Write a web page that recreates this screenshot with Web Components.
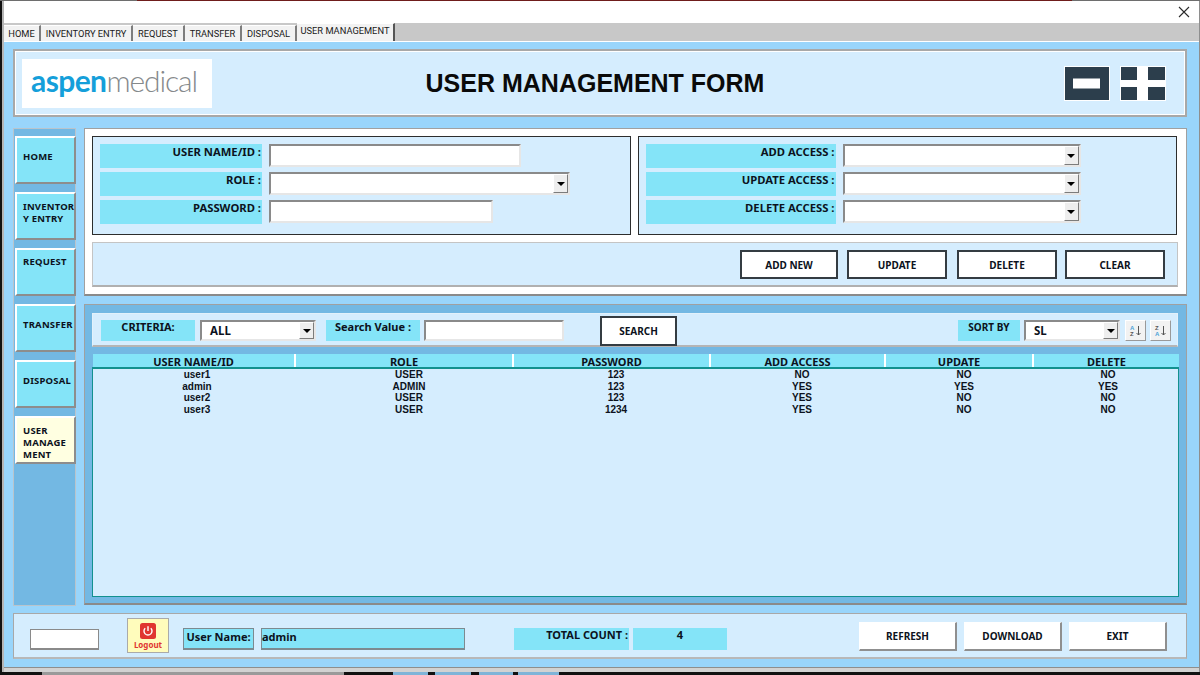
<!DOCTYPE html>
<html>
<head>
<meta charset="utf-8">
<title>User Management Form</title>
<style>
  html, body { margin: 0; height: 100%; background: #111; overflow: hidden; }
  body { font: bold 11px "Noto Sans", Tahoma, sans-serif; color: #0c1220; }
</style>
</head>
<body>
<app-window>
  <tab-strip></tab-strip>
  <form-header></form-header>
  <div id="middle" style="display:flex;gap:8px;height:478px;margin-top:11px">
    <side-menu></side-menu>
    <div style="display:flex;flex-direction:column;gap:8px;width:1103px">
      <entry-panel></entry-panel>
      <grid-panel></grid-panel>
    </div>
  </div>
  <status-bar></status-bar>
</app-window>

<script>
const sunken = 'border:2px solid; border-color:#8a8a8a #e6e6e6 #e6e6e6 #8a8a8a;';

class AppWindow extends HTMLElement {
  constructor() {
    super();
    this.attachShadow({ mode: 'open' }).innerHTML = `
      <style>
        :host { display: block; height: 675px; box-sizing: border-box; }
        .edge { height: 1px; display: flex; }
        .edge i { display: block; height: 1px; }
        .frame { margin-left: 2px; width: 1195px; border-left: 2px solid #b5b5b5; border-right: 2px solid #8e8e8e; background: #fff; }
        .title { height: 22px; display: flex; justify-content: flex-end; align-items: center; padding-right: 9px; }
        .page { height: 626px; background: #99d5fb; padding: 7px 4px 0 9px; box-sizing: border-box; border-top: 1px solid #fff; }
        .foot { height: 4px; background: #d2d2d2; border-top: 1px solid #8e8e8e; }
        .taskbar { display: flex; height: 3px; background: #111; }
        .taskbar i { display: block; height: 3px; }
      </style>
      <div class="edge"><i style="width:137px;background:#6e6e6e"></i><i style="width:935px;background:#6f1d1b"></i><i style="width:128px;background:#6e6e6e"></i></div>
      <div class="frame">
        <div class="title">
          <svg width="12" height="12" viewBox="0 0 12 12"><path d="M1 1L11 11M11 1L1 11" stroke="#2a2a2a" stroke-width="1.1" fill="none"/></svg>
        </div>
        <slot name="tabs"></slot>
        <div class="page"><slot></slot></div>
        <div class="foot"></div>
      </div>
      <div class="taskbar">
        <i style="width:302px;margin-left:42px;background:#9a9a9a"></i>
        <i style="width:35px;margin-left:49px;background:#7fb4d8"></i>
        <i style="width:36px;margin-left:7px;background:#7fb4d8"></i>
        <i style="width:34px;margin-left:8px;background:#7fb4d8"></i>
        <i style="width:41px;margin-left:5px;background:#7fb4d8"></i>
      </div>`;
    const tabs = this.querySelector('tab-strip');
    if (tabs) tabs.slot = 'tabs';
  }
}

class TabStrip extends HTMLElement {
  constructor() {
    super();
    const names = ['HOME', 'INVENTORY ENTRY', 'REQUEST', 'TRANSFER', 'DISPOSAL', 'USER MANAGEMENT'];
    const widths = [37, 92, 52, 57, 55, 98];
    const html = names.map((n, i) =>
      `<span class="tab ${i === 5 ? 'on' : ''}" style="width:${widths[i]}px">${n}</span>`).join('');
    this.attachShadow({ mode: 'open' }).innerHTML = `
      <style>
        :host { display: flex; height: 18px; background: #c8c8c8; align-items: flex-end; overflow: hidden; }
        .tab { display: block; box-sizing: border-box; height: 16px; background: #f2f2f2; border-right: 2px solid #7d7d7d; border-top: 1px solid #fff;
          font: 400 9.300px Roboto, Arial, sans-serif; color: #1a1a1a; line-height: 15px; text-align: center; white-space: nowrap; }
        .tab.on { height: 18px; line-height: 13px; border-right: 2px solid #555; }
      </style>${html}`;
  }
}

class FormHeader extends HTMLElement {
  constructor() {
    super();
    this.attachShadow({ mode: 'open' }).innerHTML = `
      <style>
        :host { display: flex; box-sizing: border-box; width: 1174px; height: 68px; background: #d5edfe; border: 2px solid #a8a8a8; outline: 1px solid #fff; outline-offset: -3px; align-items: center; padding: 0 19px 0 7px; }
        .logo { width: 190px; height: 49px; background: #fff; font: 300 30px Lato, "Open Sans", sans-serif; letter-spacing: -1.1px; line-height: 43px; padding-left: 9px; box-sizing: border-box; color: #85898b; white-space: nowrap; }
        .logo b { color: #159fda; font-weight: 700; letter-spacing: -.6px; }
        h1 { flex: 1; margin: 0; text-align: center; font: 700 25px "Liberation Sans", Arial, sans-serif; color: #0a0a0a; padding-right: 86px; }
        .tools { display: flex; gap: 10px; }
        svg { display: block; }
      </style>
      <div class="logo"><b>aspen</b>medical</div>
      <h1>USER MANAGEMENT FORM</h1>
      <div class="tools">
        <svg width="46" height="35" viewBox="0 0 46 35"><rect width="46" height="35" fill="#fff"/><rect x="1" y="1" width="44" height="33" fill="#2c3e4c"/><rect x="9" y="12.500" width="27" height="10" fill="#fff"/></svg>
        <svg width="46" height="35" viewBox="0 0 46 35"><rect width="46" height="35" fill="#fff"/><rect x="1" y="1" width="44" height="33" fill="#2c3e4c"/><rect x="17" y="0" width="11" height="35" fill="#fff"/><rect x="0" y="14" width="46" height="7" fill="#fff"/></svg>
      </div>`;
  }
}

class SideMenu extends HTMLElement {
  constructor() {
    super();
    const items = [['HOME', ''], ['INVENTOR<br>Y ENTRY', ''], ['REQUEST', 'tr'], ['TRANSFER', 'tt'], ['DISPOSAL', ''], ['USER<br>MANAGE<br>MENT', 'on']];
    this.attachShadow({ mode: 'open' }).innerHTML = `
      <style>
        :host { display: flex; flex-direction: column; gap: 8px; box-sizing: border-box; width: 63px; height: 478px; background: #73b8e3; border: 1px solid #b9c4cc; padding: 7px 0 0 1px; }
        .b { box-sizing: border-box; width: 61px; height: 48px; background: #84e4f8; border: 2px solid; border-color: #fff #8d8d8d #8d8d8d #fff; padding: 0 0 6px 6px; display: flex; align-items: center; font-size: 9.500px; letter-spacing: .2px; line-height: 12px; white-space: nowrap; }
        .tr { align-items: flex-start; padding: 6px 0 0 6px; }
        .tt { align-items: flex-start; padding: 13px 0 0 6px; }
        .on { background: #ffffe1; padding: 6px 0 0 6px; }
      </style>
      ${items.map(([t, c]) => `<div class="b ${c}"><span>${t}</span></div>`).join('')}`;
  }
}

class FieldLabel extends HTMLElement {
  constructor() {
    super();
    this.attachShadow({ mode: 'open' }).innerHTML = `
      <style>
        :host { display: block; box-sizing: border-box; height: 24px; background: #84e4f8; font-size: 11.250px; line-height: 15px; padding: 0 1px; white-space: nowrap; text-align: right; }
      </style><slot></slot>`;
  }
}

class TextField extends HTMLElement {
  constructor() {
    super();
    this.attachShadow({ mode: 'open' }).innerHTML = `
      <style>
        :host { display: block; box-sizing: border-box; height: 23px; background: #fff; ${sunken} font-size: 11.500px; line-height: 19px; padding-left: 7px; }
      </style><slot></slot>`;
  }
}

class ComboField extends HTMLElement {
  constructor() {
    super();
    this.attachShadow({ mode: 'open' }).innerHTML = `
      <style>
        :host { display: flex; box-sizing: border-box; height: 23px; background: #fff; ${sunken} font-size: 11.500px; line-height: 17px; }
        .v { flex: 1; padding-left: 8px; }
        .arrow { box-sizing: border-box; width: 15px; background: #eee; border: 1px solid; border-color: #fff #7c7c7c #7c7c7c #fff; display: flex; align-items: center; justify-content: center; }
        .arrow i { display: block; border: 4px solid transparent; border-top: 4px solid #000; border-bottom: 0; }
      </style>
      <div class="v"><slot></slot></div>
      <div class="arrow"><i></i></div>`;
  }
}

class CmdButton extends HTMLElement {
  constructor() {
    super();
    this.attachShadow({ mode: 'open' }).innerHTML = `
      <style>
        :host { display: flex; align-items: center; justify-content: center; box-sizing: border-box; height: 29px; background: #fff; border: 2px solid #343c42; font-size: 10px; color: #0c1220; }
        :host([flat]) { border: 1px solid #fff; border-right: 2px solid #8f8f8f; border-bottom: 2px solid #8f8f8f; }
      </style><slot></slot>`;
  }
}

class EntryPanel extends HTMLElement {
  constructor() {
    super();
    this.attachShadow({ mode: 'open' }).innerHTML = `
      <style>
        :host { display: block; box-sizing: border-box; height: 168px; background: #fff; border: 1px solid #a0a0a0; border-bottom: 2px solid #8a8a8a; padding: 7px 9px 0 7px; }
        .row { display: flex; gap: 7px; }
        .box { box-sizing: border-box; width: 539px; height: 99px; background: #d5edfe; border: 1px solid #2d2d2d; padding: 7px; display: grid; row-gap: 4px; align-content: start; }
        .box.r { width: 540px; }
        .box > div { display: grid; column-gap: 7px; align-items: start; }
        .acts { box-sizing: border-box; margin-top: 7px; height: 45px; width: 1086px; background: #d5edfe; border: 1px solid #c4c4c4; border-bottom: 2px solid #b0b0b0; display: flex; justify-content: flex-end; gap: 0; padding: 7px 12px 0 0; }
        .acts cmd-button { width: 98px; }
      </style>
      <div class="row">
        <div class="box">
          <div style="grid-template-columns:162px 252px"><field-label>USER NAME/ID :</field-label><text-field></text-field></div>
          <div style="grid-template-columns:162px 301px"><field-label>ROLE :</field-label><combo-field></combo-field></div>
          <div style="grid-template-columns:162px 224px"><field-label>PASSWORD :</field-label><text-field></text-field></div>
        </div>
        <div class="box r">
          <div style="grid-template-columns:190px 238px"><field-label>ADD ACCESS :</field-label><combo-field></combo-field></div>
          <div style="grid-template-columns:190px 238px"><field-label>UPDATE ACCESS :</field-label><combo-field></combo-field></div>
          <div style="grid-template-columns:190px 238px"><field-label>DELETE ACCESS :</field-label><combo-field></combo-field></div>
        </div>
      </div>
      <div class="acts">
        <cmd-button>ADD NEW</cmd-button>
        <cmd-button style="margin-left:9px;width:100px">UPDATE</cmd-button>
        <cmd-button style="margin-left:10px;width:100px">DELETE</cmd-button>
        <cmd-button style="margin-left:8px;width:100px">CLEAR</cmd-button>
      </div>`;
  }
}

class GridPanel extends HTMLElement {
  constructor() {
    super();
    const cols = 'grid-template-columns:203px 218px 197px 175px 148px 1fr';
    const rowCols = 'grid-template-columns:208px 216px 198px 174px 150px 138px';
    const heads = ['USER NAME/ID', 'ROLE', 'PASSWORD', 'ADD ACCESS', 'UPDATE', 'DELETE'];
    const rows = [
      ['user1', 'USER', '123', 'NO', 'NO', 'NO'],
      ['admin', 'ADMIN', '123', 'YES', 'YES', 'YES'],
      ['user2', 'USER', '123', 'YES', 'NO', 'NO'],
      ['user3', 'USER', '1234', 'YES', 'NO', 'NO'],
    ];
    const sortIcon = (a, b, colorA, colorB) => `<svg width="13" height="13" viewBox="0 0 13 13">
      <text x="1" y="6" font-size="6" font-family="Liberation Sans" fill="${colorA}">${a}</text>
      <text x="1" y="12" font-size="6" font-family="Liberation Sans" fill="${colorB}">${b}</text>
      <path d="M9.500 2V11M7.500 9L9.500 11L11.500 9" stroke="#555" fill="none"/></svg>`;
    this.attachShadow({ mode: 'open' }).innerHTML = `
      <style>
        :host { display: block; box-sizing: border-box; height: 301px; background: #73b8e3; border: 1px solid #a0a0a0; border-bottom: 2px solid #8a8a8a; padding: 8px 8px 0 7px; }
        .search { box-sizing: border-box; height: 34px; width: 1086px; background: #d5edfe; border: 1px solid #e2f1fb; border-bottom: 2px solid #b5b5b5; display: flex; padding-left: 8px; align-items: flex-start; }
        .lab { box-sizing: border-box; background: #84e4f8; height: 21px; margin-top: 6px; text-align: center; line-height: 14px; white-space: nowrap; }
        combo-field, text-field { margin-top: 6px; height: 21px; }
        .sb { box-sizing: border-box; width: 21px; height: 21px; margin-top: 6px; background: #f2f2f2; border: 1px solid #fff; border-right: 1px solid #999; border-bottom: 1px solid #999; display: flex; align-items: center; justify-content: center; }
        .head { display: grid; ${cols}; width: 1086px; margin: 7px 0 0 1px; height: 13px; background: #fff; gap: 0; }
        .head span { background: #84e4f8; text-align: center; line-height: 15px; margin-right: 2px; height: 13px; font-size: 11px; }
        .head span:last-child { margin-right: 0; }
        .list { box-sizing: border-box; width: 1087px; height: 230px; background: #d5edfe; border: 1px solid #12918f; border-top-width: 2px; }
        .r { display: grid; ${rowCols}; height: 11.500px; line-height: 11.500px; text-align: center; font: 700 10px/11.500px "Liberation Sans", Tahoma, sans-serif; }
        .r span { white-space: nowrap; }
      </style>
      <div class="search">
        <div class="lab" style="width:94px">CRITERIA:</div>
        <combo-field style="width:116px;margin-left:5px">ALL</combo-field>
        <div class="lab" style="width:94px;margin-left:10px">Search Value :</div>
        <text-field style="width:140px;margin-left:4px"></text-field>
        <cmd-button style="width:77px;height:30px;margin:2px 0 0 36px">SEARCH</cmd-button>
        <div class="lab" style="width:62px;margin-left:281px;font-size:10px">SORT BY</div>
        <combo-field style="width:96px;margin-left:4px">SL</combo-field>
        <div class="sb" style="margin-left:5px">${sortIcon('A', 'Z', '#4aa3d8', '#555')}</div>
        <div class="sb" style="margin-left:4px">${sortIcon('Z', 'A', '#555', '#4aa3d8')}</div>
      </div>
      <div class="head">${heads.map(h => `<span>${h}</span>`).join('')}</div>
      <div class="list">
        ${rows.map(r => `<div class="r">${r.map(c => `<span>${c}</span>`).join('')}</div>`).join('')}
      </div>`;
  }
}

class StatusBar extends HTMLElement {
  constructor() {
    super();
    this.attachShadow({ mode: 'open' }).innerHTML = `
      <style>
        :host { display: flex; box-sizing: border-box; width: 1174px; height: 46px; margin-top: 7px; background: #d5edfe; border: 1px solid #a8a8a8; border-bottom: 2px solid #b8b8b8; padding-left: 16px; }
        .blank { box-sizing: border-box; width: 69px; height: 21px; margin-top: 15px; background: #fff; border: 1px solid #8a8a8a; border-bottom-width: 2px; }
        .logout { box-sizing: border-box; width: 42px; height: 35px; margin: 4px 0 0 28px; background: #fffcbc; border: 1px solid #aaa; display: flex; flex-direction: column; align-items: center; padding-top: 4px; font: 700 8px "Noto Sans", sans-serif; color: #e03530; line-height: 11px; }
        .logout svg { display: block; }
        .tag { box-sizing: border-box; height: 22px; margin-top: 14px; background: #84e4f8; white-space: nowrap; }
        .boxed { border: 1px solid #7c8a90; border-bottom-width: 2px; line-height: 16px; font-size: 11px; }
        .plain { text-align: center; line-height: 14px; }
        .btns { display: flex; gap: 7px; margin: 8px 0 0 132px; }
        .btns cmd-button { width: 98px; }
      </style>
      <div class="blank"></div>
      <div class="logout">
        <svg width="16" height="16" viewBox="0 0 16 16"><rect width="16" height="16" rx="2.500" fill="#e03530"/><path d="M5.200 5.200A4 4 0 1 0 10.800 5.200" stroke="#fff" stroke-width="1.400" fill="none"/><path d="M8 3.200V8" stroke="#fff" stroke-width="1.400"/></svg>
        <span>Logout</span>
      </div>
      <div class="tag boxed" style="width:71px;margin-left:14px;text-align:center">User Name:</div>
      <div class="tag boxed" style="width:204px;margin-left:7px">admin</div>
      <div class="tag plain" style="width:115px;margin-left:49px;text-align:right;padding-right:1px">TOTAL COUNT :</div>
      <div class="tag plain" style="width:94px;margin-left:4px">4</div>
      <div class="btns">
        <cmd-button flat>REFRESH</cmd-button>
        <cmd-button flat>DOWNLOAD</cmd-button>
        <cmd-button flat>EXIT</cmd-button>
      </div>`;
  }
}

customElements.define('field-label', FieldLabel);
customElements.define('text-field', TextField);
customElements.define('combo-field', ComboField);
customElements.define('cmd-button', CmdButton);
customElements.define('tab-strip', TabStrip);
customElements.define('form-header', FormHeader);
customElements.define('side-menu', SideMenu);
customElements.define('entry-panel', EntryPanel);
customElements.define('grid-panel', GridPanel);
customElements.define('status-bar', StatusBar);
customElements.define('app-window', AppWindow);
</script>
</body>
</html>
